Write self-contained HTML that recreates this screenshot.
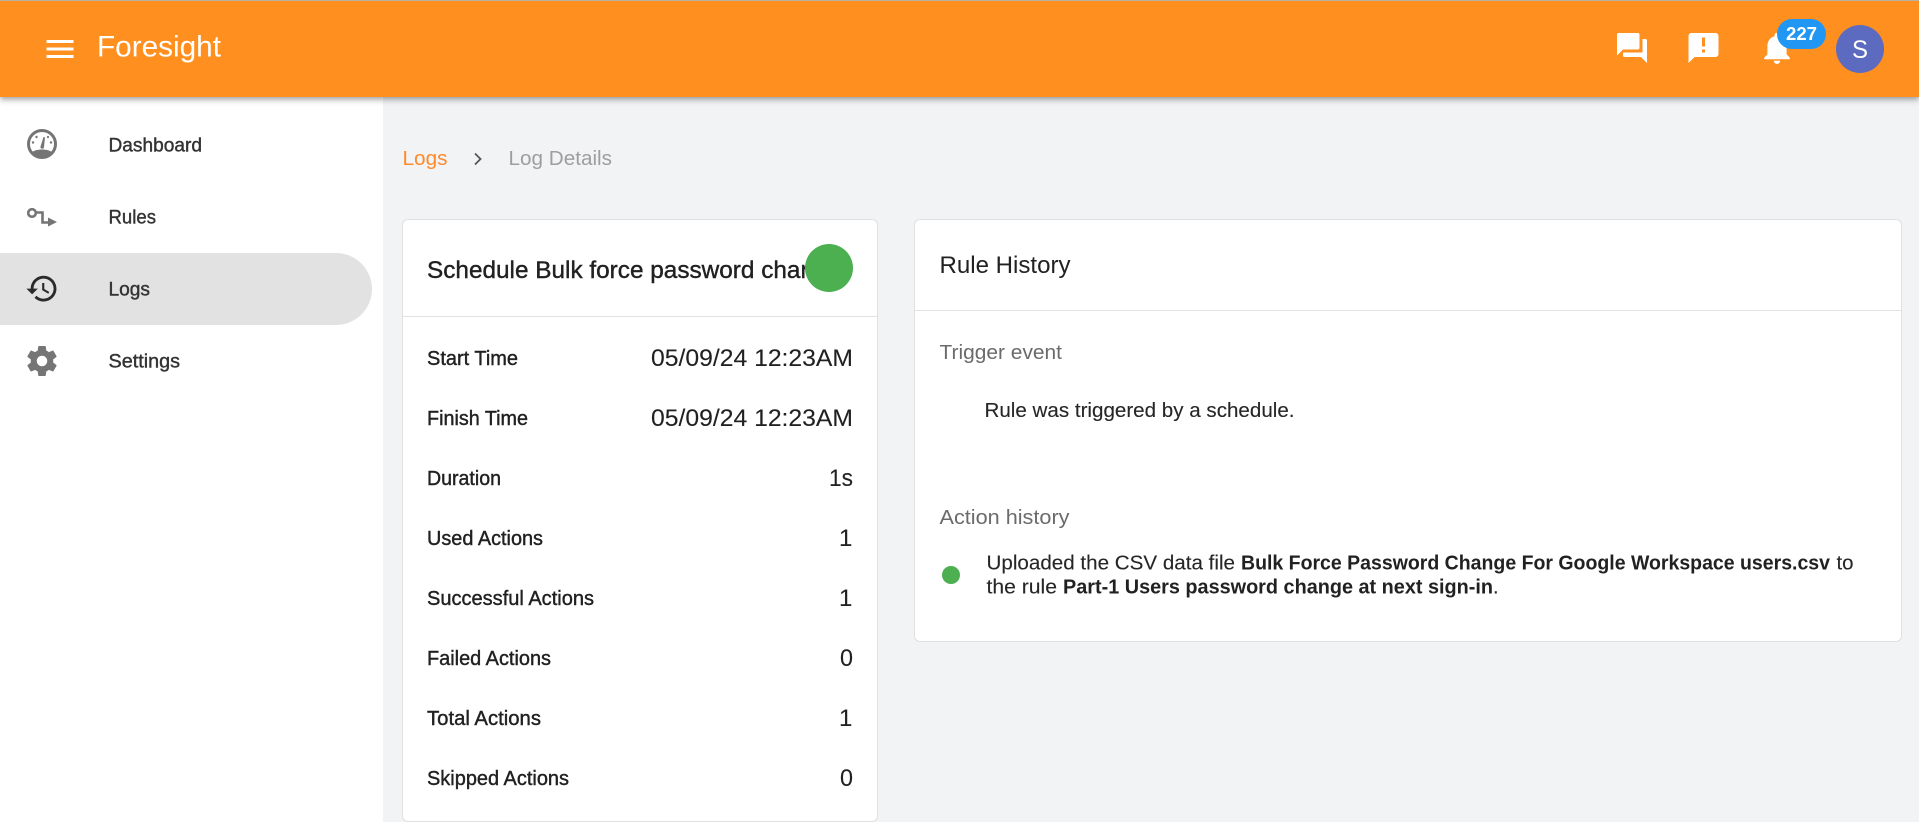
<!DOCTYPE html>
<html lang="en"><head><meta charset="utf-8"><title>Foresight</title>
<style>
html,body{margin:0;padding:0;width:1919px;height:822px;overflow:hidden;background:#f2f3f5;font-family:"Liberation Sans",sans-serif}
.a{position:absolute}
#hdr{left:0;top:0;width:1919px;height:97px;background:#ff8f1f;border-top:1px solid #b9b0a6;box-sizing:border-box;box-shadow:0 2px 4px -1px rgba(0,0,0,.2),0 4px 5px rgba(0,0,0,.14),0 1px 10px rgba(0,0,0,.12);z-index:2}
#side{left:0;top:0;width:383px;height:822px;background:#fff}
#pill{left:0;top:253px;width:372px;height:72px;background:#e2e2e2;border-radius:0 36px 36px 0}
.card{background:#fff;border:1px solid #e0e0e0;border-radius:6px;box-sizing:border-box}
.line{height:1px;background:#e2e2e2}
svg{position:absolute;left:0;top:0;z-index:3}
text{font-family:"Liberation Sans",sans-serif;fill:#212121}
.m{stroke:#212121;stroke-width:.4px}
.nav{font-size:19px;fill:#333;stroke:#333;stroke-width:.4px}
.lab{font-size:20px}
.val{font-size:24px;fill:#2b2b2b;stroke:#2b2b2b;stroke-width:.1px}
.b{font-weight:700;font-size:20px}
.r{font-size:20px;fill:#262626;stroke:#262626;stroke-width:.12px}
.g{font-size:20.5px;fill:#6b6b6b}
</style></head><body>
<div class="a" id="side"></div>
<div class="a" id="pill"></div>
<div class="a" id="hdr"></div>
<div class="a card" style="left:402px;top:219px;width:476px;height:603px"></div>
<div class="a line" style="left:402px;top:316px;width:476px"></div>
<div class="a card" style="left:914px;top:219px;width:988px;height:423px"></div>
<div class="a line" style="left:914px;top:310px;width:988px"></div>

<svg width="1919" height="822" viewBox="0 0 1919 822" xmlns="http://www.w3.org/2000/svg">
<!-- header -->
<g fill="#fff">
<path transform="translate(42 31) scale(1.5)" d="M3 18h18v-2H3v2zm0-5h18v-2H3v2zm0-7v2h18V6H3z"/>
<path transform="translate(1614 30) scale(1.5)" d="M21 6h-2v9H6v2c0 .55.45 1 1 1h11l4 4V7c0-.55-.45-1-1-1zm-4 6V3c0-.55-.45-1-1-1H3c-.55 0-1 .45-1 1v14l4-4h10c.55 0 1-.45 1-1z"/>
<path transform="translate(1685.500 30) scale(1.5)" d="M20 2H4c-1.1 0-1.99.9-1.99 2L2 22l4-4h14c1.1 0 2-.9 2-2V4c0-1.1-.9-2-2-2zm-7 9h-2V5h2v6zm0 4h-2v-2h2v2z"/>
<path transform="translate(1757.800 28.800) scale(1.6)" d="M12 22c1.1 0 2-.9 2-2h-4c0 1.1.89 2 2 2zm6-6v-5c0-3.07-1.64-5.64-4.5-6.32V4c0-.83-.67-1.5-1.5-1.5s-1.5.67-1.5 1.5v.68C7.63 5.36 6 7.92 6 11v5l-2 2v1h16v-1l-2-2z"/>
</g>
<text x="97" y="56.500" font-size="30" textLength="124" lengthAdjust="spacingAndGlyphs" style="fill:#fff">Foresight</text>
<rect x="1777" y="19" width="49" height="30" rx="15" fill="#2196f3"/>
<text x="1786" y="40" font-size="18" font-weight="700" textLength="31" lengthAdjust="spacingAndGlyphs" style="fill:#fff">227</text>
<circle cx="1860" cy="49" r="24" fill="#5c6bc0"/>
<text x="1852" y="58" font-size="25" textLength="16" lengthAdjust="spacingAndGlyphs" style="fill:#fff">S</text>

<!-- nav icons -->
<g fill="#757575">
<circle cx="42" cy="144" r="13.500" fill="#fff" stroke="#757575" stroke-width="3"/>
<path d="M31.500 152.500c2.500-2 6-3 10.500-3s8 1 10.500 3c-2.500 4-6 6-10.500 6s-8-2-10.500-6z"/>
<path d="M40.500 146.500l3-9.500 1.500.4-1 10a1.800 1.800 0 0 1-3.500-.9z"/>
<circle cx="36.500" cy="137" r="1.200"/><circle cx="33" cy="142.500" r="1.200"/><circle cx="51" cy="142.500" r="1.200"/><circle cx="48" cy="137" r="1.100"/>
<circle cx="32" cy="213" r="3.800" fill="none" stroke="#757575" stroke-width="2.600"/>
<path d="M36 212.500h6.500v10h6" fill="none" stroke="#757575" stroke-width="2.600"/>
<path d="M48 217.500l9 4.500-9 4.500z"/>
<path transform="translate(24 343) scale(1.5)" d="M19.430 12.980c.04-.32.07-.64.07-.98s-.03-.66-.07-.98l2.110-1.650c.19-.15.24-.42.12-.64l-2-3.460c-.12-.22-.39-.3-.61-.22l-2.490 1c-.52-.4-1.080-.73-1.690-.98l-.38-2.650C14.460 2.180 14.250 2 14 2h-4c-.25 0-.46.18-.49.42l-.38 2.650c-.61.25-1.170.59-1.690.98l-2.490-1c-.23-.09-.49 0-.61.22l-2 3.460c-.13.22-.07.49.12.64l2.110 1.650c-.04.32-.07.65-.07.98s.03.66.07.98l-2.110 1.650c-.19.15-.24.42-.12.64l2 3.460c.12.22.39.3.61.22l2.490-1c.52.4 1.080.73 1.690.98l.38 2.650c.03.24.24.42.49.42h4c.25 0 .46-.18.49-.42l.38-2.650c.61-.25 1.170-.59 1.690-.98l2.490 1c.23.09.49 0 .61-.22l2-3.460c.12-.22.07-.49-.12-.64l-2.110-1.650zM12 15.500c-1.930 0-3.500-1.570-3.500-3.500s1.570-3.500 3.500-3.500 3.500 1.570 3.500 3.500-1.570 3.500-3.500 3.500z"/>
</g>
<path fill="#2b2b2b" transform="translate(25 271.500) scale(1.43)" d="M13 3c-4.970 0-9 4.030-9 9H1l3.890 3.890.07.14L9 12H6c0-3.870 3.130-7 7-7s7 3.130 7 7-3.130 7-7 7c-1.930 0-3.680-.79-4.940-2.060l-1.420 1.420C8.270 19.990 10.510 21 13 21c4.970 0 9-4.030 9-9s-4.030-9-9-9zm-1 5v5l4.280 2.540.72-1.210-3.500-2.080V8H12z"/>

<!-- nav text -->
<text class="nav" x="108.500" y="151.500" textLength="93.500" lengthAdjust="spacingAndGlyphs">Dashboard</text>
<text class="nav" x="108.500" y="223.500" textLength="47.500" lengthAdjust="spacingAndGlyphs">Rules</text>
<text class="nav" x="108.500" y="295.500" textLength="41.500" lengthAdjust="spacingAndGlyphs">Logs</text>
<text class="nav" x="108.500" y="367.500" textLength="71.500" lengthAdjust="spacingAndGlyphs">Settings</text>

<!-- breadcrumb -->
<text x="402.500" y="165" font-size="20" textLength="45" lengthAdjust="spacingAndGlyphs" style="fill:#ff8a2b">Logs</text>
<path d="M475 153.500l5.500 5.500-5.500 5.500" fill="none" stroke="#555" stroke-width="1.800"/>
<text x="508.500" y="165" font-size="20" textLength="103.500" lengthAdjust="spacingAndGlyphs" style="fill:#9e9e9e">Log Details</text>

<!-- left card -->
<text class="m" x="427" y="278" font-size="24" textLength="387" lengthAdjust="spacingAndGlyphs">Schedule Bulk force password chan</text>
<circle cx="829" cy="268" r="24" fill="#4caf50"/>
<g class="lab">
<text class="m" x="427" y="365" textLength="91" lengthAdjust="spacingAndGlyphs">Start Time</text>
<text class="m" x="427" y="425" textLength="101" lengthAdjust="spacingAndGlyphs">Finish Time</text>
<text class="m" x="427" y="485" textLength="74" lengthAdjust="spacingAndGlyphs">Duration</text>
<text class="m" x="427" y="545" textLength="116" lengthAdjust="spacingAndGlyphs">Used Actions</text>
<text class="m" x="427" y="605" textLength="167" lengthAdjust="spacingAndGlyphs">Successful Actions</text>
<text class="m" x="427" y="665" textLength="124" lengthAdjust="spacingAndGlyphs">Failed Actions</text>
<text class="m" x="427" y="725" textLength="114" lengthAdjust="spacingAndGlyphs">Total Actions</text>
<text class="m" x="427" y="785" textLength="142" lengthAdjust="spacingAndGlyphs">Skipped Actions</text>
</g>
<g class="val">
<text x="651" y="366" textLength="202" lengthAdjust="spacingAndGlyphs">05/09/24 12:23AM</text>
<text x="651" y="426" textLength="202" lengthAdjust="spacingAndGlyphs">05/09/24 12:23AM</text>
<text x="829" y="486" textLength="24" lengthAdjust="spacingAndGlyphs">1s</text>
<text x="839" y="546">1</text>
<text x="839" y="606">1</text>
<text x="840" y="666" textLength="13" lengthAdjust="spacingAndGlyphs">0</text>
<text x="839" y="726">1</text>
<text x="840" y="786" textLength="13" lengthAdjust="spacingAndGlyphs">0</text>
</g>

<!-- right card -->
<text x="939.500" y="273" font-size="24" textLength="131" lengthAdjust="spacingAndGlyphs">Rule History</text>
<text class="g" x="939.500" y="359" textLength="122.500" lengthAdjust="spacingAndGlyphs">Trigger event</text>
<text class="r" x="984.500" y="417" textLength="310" lengthAdjust="spacingAndGlyphs">Rule was triggered by a schedule.</text>
<text class="g" x="939.500" y="524" textLength="130" lengthAdjust="spacingAndGlyphs">Action history</text>
<circle cx="951" cy="575" r="9" fill="#4caf50"/>
<text class="r" x="986.500" y="569.500" textLength="248.500" lengthAdjust="spacingAndGlyphs">Uploaded the CSV data file</text>
<text class="b" x="1241" y="569.500" textLength="589" lengthAdjust="spacingAndGlyphs">Bulk Force Password Change For Google Workspace users.csv</text>
<text class="r" x="1836.500" y="569.500" textLength="17" lengthAdjust="spacingAndGlyphs">to</text>
<text class="r" x="986.500" y="593.500" textLength="70.500" lengthAdjust="spacingAndGlyphs">the rule</text>
<text class="b" x="1063" y="593.500" textLength="430" lengthAdjust="spacingAndGlyphs">Part-1 Users password change at next sign-in</text>
<text class="r" x="1493" y="593.500">.</text>
</svg>
</body></html>
